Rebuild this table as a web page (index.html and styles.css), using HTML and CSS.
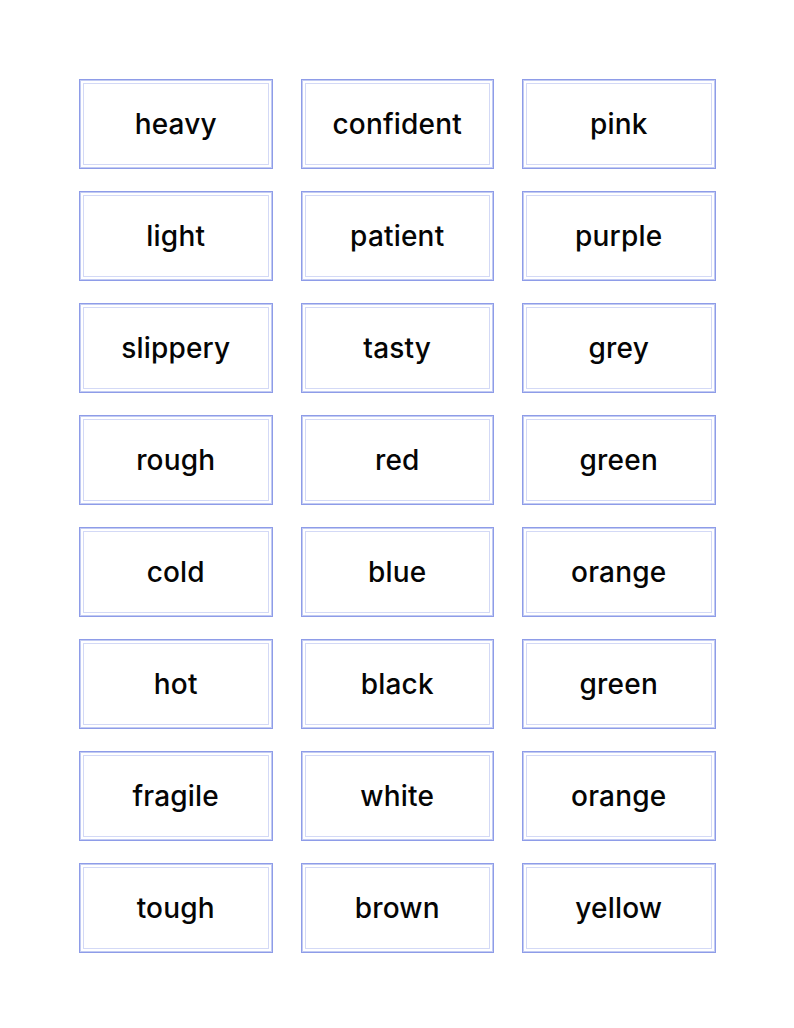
FILE: index.html
```html
<!DOCTYPE html>
<html lang="en">
<head>
<meta charset="utf-8">
<title>Word cards</title>
<link rel="stylesheet" href="styles.css">
</head>
<body>
<div class="sheet">
  <div class="card">heavy</div>
  <div class="card">confident</div>
  <div class="card">pink</div>
  <div class="card">light</div>
  <div class="card">patient</div>
  <div class="card">purple</div>
  <div class="card">slippery</div>
  <div class="card">tasty</div>
  <div class="card">grey</div>
  <div class="card">rough</div>
  <div class="card">red</div>
  <div class="card">green</div>
  <div class="card">cold</div>
  <div class="card">blue</div>
  <div class="card">orange</div>
  <div class="card">hot</div>
  <div class="card">black</div>
  <div class="card">green</div>
  <div class="card">fragile</div>
  <div class="card">white</div>
  <div class="card">orange</div>
  <div class="card">tough</div>
  <div class="card">brown</div>
  <div class="card">yellow</div>
</div>
</body>
</html>
```

FILE: styles.css
```css
html, body {
  margin: 0;
  padding: 0;
  background: #ffffff;
}

.sheet {
  display: grid;
  grid-template-columns: repeat(3, 193.5px);
  grid-auto-rows: 90px;
  column-gap: 28px;
  row-gap: 22px;
  padding: 79px 0 0 79px;
}

.card {
  box-sizing: border-box;
  border: 1px solid #8e9ce8;
  box-shadow: inset 0 0 0 1px #c2cbf3, inset 0 0 0 3px #ffffff, inset 0 0 0 4px #d3d9f6;
  display: flex;
  align-items: center;
  justify-content: center;
  font-family: "Inter", "Lato", sans-serif;
  font-weight: 500;
  font-size: 28px;
  color: #050505;
  letter-spacing: 0.2px;
}
```
